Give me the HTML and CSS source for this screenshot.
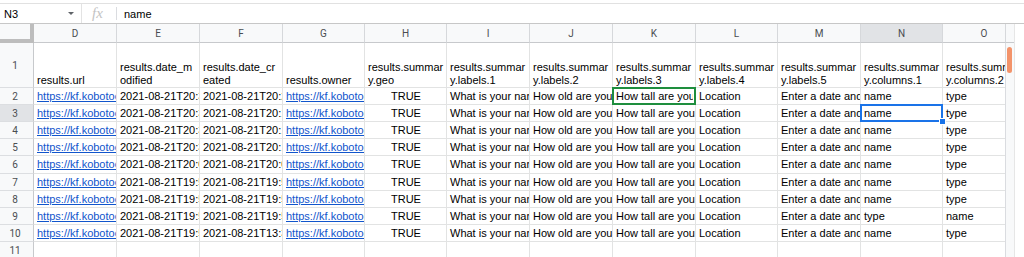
FILE: index.html
```html
<!DOCTYPE html>
<html>
<head>
<meta charset="utf-8">
<link rel="stylesheet" href="styles.css">
</head>
<body>
<div class="fbar">
  <div class="namebox"><span class="ref">N3</span><span class="caret"></span></div>
  <div class="sep1"></div>
  <div class="fx">fx</div>
  <div class="sep2"></div>
  <div class="ftext">name</div>
</div>
<div class="main">
  <div class="viewport">
    <div class="grid">
      <div class="corner"></div>
      <div class="ch">D</div><div class="ch">E</div><div class="ch">F</div><div class="ch">G</div><div class="ch">H</div><div class="ch">I</div><div class="ch">J</div><div class="ch">K</div><div class="ch">L</div><div class="ch">M</div><div class="ch on">N</div><div class="ch">O</div>

      <div class="rh">1</div>
      <div class="c hd">results.url</div><div class="c hd">results.date_modified</div><div class="c hd">results.date_created</div><div class="c hd">results.owner</div><div class="c hd">results.summary.geo</div><div class="c hd">results.summary.labels.1</div><div class="c hd">results.summary.labels.2</div><div class="c hd">results.summary.labels.3</div><div class="c hd">results.summary.labels.4</div><div class="c hd">results.summary.labels.5</div><div class="c hd">results.summary.columns.1</div><div class="c hd">results.summary.columns.2</div>

      <div class="rh">2</div>
      <div class="c"><a class="lnk" href="#">https://kf.kobotoolbox.org/api/v2/assets/aZx3q/</a></div><div class="c">2021-08-21T20:34:12.551203Z</div><div class="c">2021-08-21T20:29:41.118740Z</div><div class="c"><a class="lnk" href="#">https://kf.kobotoolbox.org/api/v2/users/demo/</a></div><div class="c ctr">TRUE</div><div class="c">What is your name?</div><div class="c">How old are you?</div><div class="c green"><span class="clip">How tall are you?</span></div><div class="c">Location</div><div class="c">Enter a date and time</div><div class="c">name</div><div class="c">type</div>

      <div class="rh on">3</div>
      <div class="c"><a class="lnk" href="#">https://kf.kobotoolbox.org/api/v2/assets/aQw8e/</a></div><div class="c">2021-08-21T20:31:05.204418Z</div><div class="c">2021-08-21T20:19:27.630955Z</div><div class="c"><a class="lnk" href="#">https://kf.kobotoolbox.org/api/v2/users/demo/</a></div><div class="c ctr">TRUE</div><div class="c">What is your name?</div><div class="c">How old are you?</div><div class="c">How tall are you?</div><div class="c">Location</div><div class="c">Enter a date and time</div><div class="c blue"><span class="clip">name</span><span class="handle"></span></div><div class="c">type</div>

      <div class="rh">4</div>
      <div class="c"><a class="lnk" href="#">https://kf.kobotoolbox.org/api/v2/assets/aLm2k/</a></div><div class="c">2021-08-21T20:30:48.904210Z</div><div class="c">2021-08-21T20:18:02.773114Z</div><div class="c"><a class="lnk" href="#">https://kf.kobotoolbox.org/api/v2/users/demo/</a></div><div class="c ctr">TRUE</div><div class="c">What is your name?</div><div class="c">How old are you?</div><div class="c">How tall are you?</div><div class="c">Location</div><div class="c">Enter a date and time</div><div class="c">name</div><div class="c">type</div>

      <div class="rh">5</div>
      <div class="c"><a class="lnk" href="#">https://kf.kobotoolbox.org/api/v2/assets/aTn5r/</a></div><div class="c">2021-08-21T20:30:11.320087Z</div><div class="c">2021-08-21T20:16:39.448526Z</div><div class="c"><a class="lnk" href="#">https://kf.kobotoolbox.org/api/v2/users/demo/</a></div><div class="c ctr">TRUE</div><div class="c">What is your name?</div><div class="c">How old are you?</div><div class="c">How tall are you?</div><div class="c">Location</div><div class="c">Enter a date and time</div><div class="c">name</div><div class="c">type</div>

      <div class="rh">6</div>
      <div class="c"><a class="lnk" href="#">https://kf.kobotoolbox.org/api/v2/assets/aHy7u/</a></div><div class="c">2021-08-21T20:07:53.118205Z</div><div class="c">2021-08-21T20:05:16.902381Z</div><div class="c"><a class="lnk" href="#">https://kf.kobotoolbox.org/api/v2/users/demo/</a></div><div class="c ctr">TRUE</div><div class="c">What is your name?</div><div class="c">How old are you?</div><div class="c">How tall are you?</div><div class="c">Location</div><div class="c">Enter a date and time</div><div class="c">name</div><div class="c">type</div>

      <div class="rh">7</div>
      <div class="c"><a class="lnk" href="#">https://kf.kobotoolbox.org/api/v2/assets/aPo1i/</a></div><div class="c">2021-08-21T19:58:40.611932Z</div><div class="c">2021-08-21T19:57:12.045617Z</div><div class="c"><a class="lnk" href="#">https://kf.kobotoolbox.org/api/v2/users/demo/</a></div><div class="c ctr">TRUE</div><div class="c">What is your name?</div><div class="c">How old are you?</div><div class="c">How tall are you?</div><div class="c">Location</div><div class="c">Enter a date and time</div><div class="c">name</div><div class="c">type</div>

      <div class="rh">8</div>
      <div class="c"><a class="lnk" href="#">https://kf.kobotoolbox.org/api/v2/assets/aJk4d/</a></div><div class="c">2021-08-21T19:56:22.380144Z</div><div class="c">2021-08-21T19:55:01.792360Z</div><div class="c"><a class="lnk" href="#">https://kf.kobotoolbox.org/api/v2/users/demo/</a></div><div class="c ctr">TRUE</div><div class="c">What is your name?</div><div class="c">How old are you?</div><div class="c">How tall are you?</div><div class="c">Location</div><div class="c">Enter a date and time</div><div class="c">name</div><div class="c">type</div>

      <div class="rh">9</div>
      <div class="c"><a class="lnk" href="#">https://kf.kobotoolbox.org/api/v2/assets/aVb6s/</a></div><div class="c">2021-08-21T19:54:37.215508Z</div><div class="c">2021-08-21T19:53:48.660271Z</div><div class="c"><a class="lnk" href="#">https://kf.kobotoolbox.org/api/v2/users/demo/</a></div><div class="c ctr">TRUE</div><div class="c">What is your name?</div><div class="c">How old are you?</div><div class="c">How tall are you?</div><div class="c">Location</div><div class="c">Enter a date and time</div><div class="c">type</div><div class="c">name</div>

      <div class="rh">10</div>
      <div class="c"><a class="lnk" href="#">https://kf.kobotoolbox.org/api/v2/assets/aCx9f/</a></div><div class="c">2021-08-21T19:52:09.904833Z</div><div class="c">2021-08-21T13:30:55.127649Z</div><div class="c"><a class="lnk" href="#">https://kf.kobotoolbox.org/api/v2/users/demo/</a></div><div class="c ctr">TRUE</div><div class="c">What is your name?</div><div class="c">How old are you?</div><div class="c">How tall are you?</div><div class="c">Location</div><div class="c">Enter a date and time</div><div class="c">name</div><div class="c">type</div>

      <div class="rh">11</div>
      <div class="c"></div><div class="c"></div><div class="c"></div><div class="c"></div><div class="c"></div><div class="c"></div><div class="c"></div><div class="c"></div><div class="c"></div><div class="c"></div><div class="c"></div><div class="c"></div>
    </div>
  </div>
  <div class="vscroll">
    <div class="vs-head"></div>
    <div class="vs-track"><div class="thumb"></div></div>
  </div>
</div>
</body>
</html>
```

FILE: styles.css
```css
html, body {
  margin: 0;
  padding: 0;
  background: #fff;
}
body {
  font-family: "Liberation Sans", Arial, sans-serif;
  font-size: 11px;
  color: #000;
  overflow: hidden;
  width: 1024px;
  height: 257px;
}

/* formula bar */
.fbar {
  margin-top: 3px;
  height: 21px;
  box-sizing: border-box;
  border-top: 1px solid #e1e1e1;
  border-bottom: 1px solid #c7c7c7;
  display: flex;
  align-items: center;
}
.namebox {
  width: 81px;
  box-sizing: border-box;
  padding-left: 4px;
  display: flex;
  align-items: center;
}
.ref {
  flex: 1;
  color: #000;
}
.caret {
  width: 0;
  height: 0;
  border-left: 3px solid transparent;
  border-right: 3px solid transparent;
  border-top: 3px solid #5f6368;
  margin-right: 7px;
}
.sep1 {
  width: 1px;
  align-self: stretch;
  background: #e3e3e3;
}
.fx {
  width: 34px;
  box-sizing: border-box;
  padding-right: 3px;
  text-align: center;
  font-family: "Liberation Serif", "Times New Roman", serif;
  font-style: italic;
  font-size: 15px;
  color: #c3c3c3;
  line-height: 19px;
}
.sep2 {
  width: 1px;
  height: 13px;
  background: #dadce0;
}
.ftext {
  padding-left: 7px;
}

/* sheet */
.main {
  display: flex;
  height: 233px;
}
.viewport {
  width: 1005px;
  overflow: hidden;
  flex: none;
}
.grid {
  display: grid;
  grid-template-columns: 34px 83px 83px 83px 82px 82px 83px 83px 83px 82px 83px 82px 83px;
  grid-template-rows: 19px 45px 17px 17px 17px 17px 18px 17px 17px 17px 17px 17px;
  width: 1026px;
}
.corner {
  background: #f8f9fa;
  box-sizing: border-box;
  border-right: 4px solid #bdbdbd;
  border-bottom: 4px solid #bdbdbd;
}
.ch {
  background: #f8f9fa;
  box-sizing: border-box;
  border-right: 1px solid #d6d8db;
  border-bottom: 1px solid #c7c9cc;
  font-family: Roboto, "Liberation Sans", Arial, sans-serif;
  font-size: 10px;
  color: #4a4d51;
  display: flex;
  align-items: center;
  justify-content: center;
}
.rh {
  background: #f8f9fa;
  box-sizing: border-box;
  border-right: 1px solid #c7c9cc;
  border-bottom: 1px solid #dcdee1;
  font-family: Roboto, "Liberation Sans", Arial, sans-serif;
  font-size: 10px;
  color: #4a4d51;
  display: flex;
  align-items: center;
  justify-content: center;
  padding-right: 3px;
}
.ch.on, .rh.on {
  background: #e1e3e6;
}
.c {
  box-sizing: border-box;
  border-right: 1px solid #e2e3e3;
  border-bottom: 1px solid #e2e3e3;
  padding: 2px 2px 1px 3px;
  line-height: 13px;
  white-space: nowrap;
  overflow: hidden;
}
.c.hd {
  white-space: normal;
  word-break: break-all;
  display: flex;
  flex-direction: column;
  justify-content: flex-end;
  padding-bottom: 0;
}
.c.ctr {
  text-align: center;
}
.lnk {
  color: #1155cc;
  text-decoration: underline;
}
.clip {
  display: block;
  overflow: hidden;
  white-space: nowrap;
}
.c.green, .c.blue {
  position: relative;
  overflow: visible;
  z-index: 2;
}
.c.green::after, .c.blue::after {
  content: "";
  position: absolute;
  left: -1px;
  top: -1px;
  right: -1px;
  bottom: -1px;
  border: 2px solid #1e8e3e;
  pointer-events: none;
}
.c.blue::after {
  border-color: #1a73e8;
}
.handle {
  position: absolute;
  right: -4px;
  bottom: -4px;
  width: 5px;
  height: 5px;
  background: #1a73e8;
  border: 1px solid #fff;
  z-index: 3;
}

/* scrollbar */
.vscroll {
  width: 9px;
  flex: none;
  display: flex;
  flex-direction: column;
  border-right: 1px solid #e6e6e6;
}
.vs-head {
  height: 19px;
  box-sizing: border-box;
  background: #f8f9fa;
  border-left: 1px solid #d6d8db;
  border-bottom: 1px solid #c7c9cc;
}
.vs-track {
  flex: 1;
  background: #f8f9fa;
  border-left: 1px solid #dadce0;
  padding: 4px 0 0 1px;
}
.thumb {
  width: 5px;
  height: 26px;
  border-radius: 3px;
  background: #f3936a;
}
```
